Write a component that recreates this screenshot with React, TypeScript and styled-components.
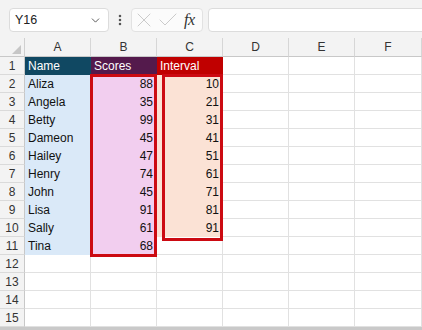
import React from "react";
import styled, { createGlobalStyle } from "styled-components";
import { ChevronDown, EllipsisVertical, X, Check } from "lucide-react";

const rows = [
  { name: "Name", score: "Scores", interval: "Interval", head: true },
  { name: "Aliza", score: "88", interval: "10" },
  { name: "Angela", score: "35", interval: "21" },
  { name: "Betty", score: "99", interval: "31" },
  { name: "Dameon", score: "45", interval: "41" },
  { name: "Hailey", score: "47", interval: "51" },
  { name: "Henry", score: "74", interval: "61" },
  { name: "John", score: "45", interval: "71" },
  { name: "Lisa", score: "91", interval: "81" },
  { name: "Sally", score: "61", interval: "91" },
  { name: "Tina", score: "68", interval: "" },
];

const columns = ["A", "B", "C", "D", "E", "F"];
const GRID = "#e1e1e1";

const GlobalStyle = createGlobalStyle`
  body {
    margin: 0;
    background: #ffffff;
    font-family: "Liberation Sans", Arial, sans-serif;
    overflow: hidden;
  }
`;

const Root = styled.div`
  width: 422px;
  height: 330px;
  overflow: hidden;
  background: #ffffff;
`;

const Toolbar = styled.div`
  height: 38px;
  box-sizing: border-box;
  padding: 8px 0 0 9px;
  display: flex;
  align-items: flex-start;
  background: #f3f3f3;
  overflow: hidden;
`;

const NameBox = styled.div`
  width: 100px;
  height: 24px;
  box-sizing: border-box;
  display: flex;
  align-items: center;
  justify-content: space-between;
  padding: 0 6px 0 5px;
  background: #ffffff;
  border: 1px solid #dcdcdc;
  border-radius: 4px;
  font-size: 12.5px;
  color: #222;
`;

const Dots = styled.div`
  width: 22px;
  height: 24px;
  display: flex;
  align-items: center;
  justify-content: center;
  color: #555;
`;

const FxGroup = styled.div`
  width: 72px;
  height: 24px;
  box-sizing: border-box;
  display: flex;
  align-items: center;
  padding: 0;
  background: #fbfbfb;
  border: 1px solid #e2e2e2;
  border-radius: 4px;
  color: #cbcbcb;
  overflow: hidden;
`;

const FxLabel = styled.span`
  margin-left: 4px;
  font-family: "Liberation Serif", "Times New Roman", serif;
  font-style: italic;
  font-size: 16px;
  color: #333;
  letter-spacing: -0.5px;
`;

const FormulaInput = styled.div`
  flex: 1;
  height: 24px;
  margin-left: 5px;
  margin-right: -10px;
  box-sizing: border-box;
  background: #ffffff;
  border: 1px solid #dcdcdc;
  border-radius: 4px;
`;

const Sheet = styled.div`
  position: relative;
  display: grid;
  grid-template-columns: 25px repeat(5, 66px) 1fr;
  grid-template-rows: 19px repeat(15, 18px);
  border-bottom: 3px solid #c9c9c9;
  font-size: 12px;
`;

const Corner = styled.div`
  position: relative;
  background: #f3f3f3;
  border-right: 1px solid #d0d0d0;
  border-bottom: 1px solid #c8c8c8;
  box-sizing: border-box;

  svg {
    position: absolute;
    right: 3px;
    bottom: 2px;
  }
`;

const ColHead = styled.div`
  display: flex;
  align-items: center;
  justify-content: center;
  background: #f3f3f3;
  border-right: 1px solid #d6d6d6;
  border-bottom: 1px solid #c8c8c8;
  box-sizing: border-box;
  color: #333;
  font-size: 12px;
`;

const RowHead = styled.div`
  display: flex;
  align-items: center;
  justify-content: center;
  background: #f3f3f3;
  border-right: 1px solid #c8c8c8;
  border-bottom: 1px solid #dadada;
  box-sizing: border-box;
  color: #333;
  font-size: 12px;
`;

const Cell = styled.div<{ $fill?: string; $color?: string; $right?: boolean }>`
  display: flex;
  align-items: center;
  justify-content: ${({ $right }) => ($right ? "flex-end" : "flex-start")};
  padding: ${({ $right }) => ($right ? "0 3px 0 0" : "0 0 0 3px")};
  box-sizing: border-box;
  background: ${({ $fill }) => $fill || "#ffffff"};
  border-right: 1px solid ${({ $fill }) => $fill || GRID};
  border-bottom: 1px solid ${({ $fill }) => $fill || GRID};
  color: ${({ $color }) => $color || "#111"};
  white-space: nowrap;
  overflow: hidden;
`;

const Frame = styled.div<{ $left: number; $top: number; $w: number; $h: number }>`
  position: absolute;
  left: ${({ $left }) => $left}px;
  top: ${({ $top }) => $top}px;
  width: ${({ $w }) => $w}px;
  height: ${({ $h }) => $h}px;
  box-sizing: border-box;
  border: 3px solid #cc0a12;
  pointer-events: none;
`;

const headFill = ["#104862", "#541a4c", "#c00000"];
const bodyFill = ["#dae9f8", "#f2ceef", "#fbe2d5"];

function cellsFor(r: number) {
  const row = rows[r];
  const out: React.ReactNode[] = [];
  for (let c = 0; c < 6; c++) {
    let text = "";
    let fill: string | undefined;
    let color: string | undefined;
    let right = false;
    if (row && c < 3) {
      text = [row.name, row.score, row.interval][c];
      if (row.head) {
        fill = headFill[c];
        color = "#ffffff";
      } else {
        right = c > 0;
        if (c < 2 || text) fill = bodyFill[c];
      }
    }
    out.push(
      <Cell key={c} $fill={fill} $color={color} $right={right}>
        {text}
      </Cell>
    );
  }
  return out;
}

export default function App() {
  return (
    <Root>
      <GlobalStyle />
      <Toolbar>
        <NameBox>
          <span>Y16</span>
          <ChevronDown size={13} color="#444" strokeWidth={1.6} />
        </NameBox>
        <Dots>
          <EllipsisVertical size={14} strokeWidth={2.4} />
        </Dots>
        <FxGroup>
          <X size={24} strokeWidth={1} style={{ flexShrink: 0 }} />
          <Check size={24} strokeWidth={1} style={{ flexShrink: 0 }} />
          <FxLabel>fx</FxLabel>
        </FxGroup>
        <FormulaInput />
      </Toolbar>
      <Sheet>
        <Corner>
          <svg width="9" height="9" viewBox="0 0 9 9">
            <polygon points="9,0 9,9 0,9" fill="#c6c6c6" />
          </svg>
        </Corner>
        {columns.map((c) => (
          <ColHead key={c}>{c}</ColHead>
        ))}
        {Array.from({ length: 15 }, (_, r) => (
          <React.Fragment key={r}>
            <RowHead>{r + 1}</RowHead>
            {cellsFor(r)}
          </React.Fragment>
        ))}
        <Frame $left={90} $top={36} $w={67} $h={183} />
        <Frame $left={162} $top={36} $w={61} $h={167} />
      </Sheet>
    </Root>
  );
}
